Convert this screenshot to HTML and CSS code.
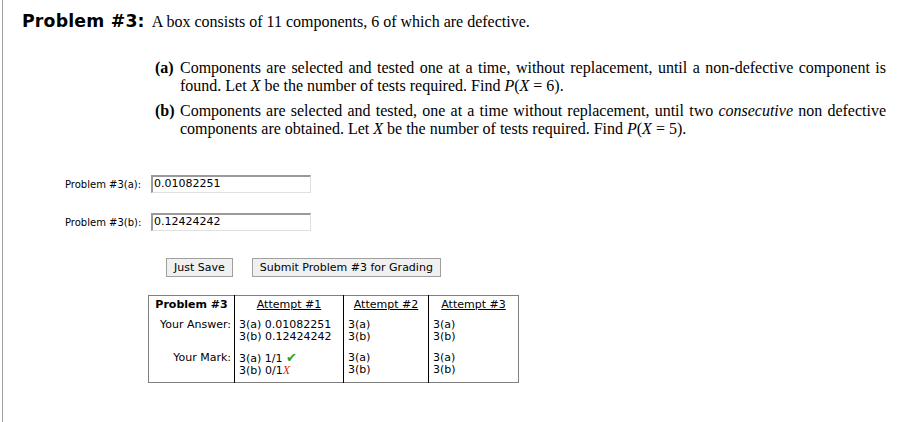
FILE: index.html
```html
<!DOCTYPE html>
<html>
<head>
<meta charset="utf-8">
<link rel="stylesheet" href="styles.css">
</head>
<body>
<div class="page">
  <div class="intro">
    <span class="ptitle">Problem #3:</span>
    <span class="serif">A box consists of 11 components, 6 of which are defective.</span>
  </div>
  <div class="parts">
    <div class="part">
      <div class="plabel">(a)</div>
      <div class="ptext">Components are selected and tested one at a time, without replacement, until a non-defective component is found. Let <i>X</i> be the number of tests required. Find <i>P</i>(<i>X</i> = 6).</div>
    </div>
    <div class="part">
      <div class="plabel">(b)</div>
      <div class="ptext">Components are selected and tested, one at a time without replacement, until two <i>consecutive</i> non defective components are obtained. Let <i>X</i> be the number of tests required. Find <i>P</i>(<i>X</i> = 5).</div>
    </div>
  </div>
  <div class="answers">
    <div class="arow"><span class="alabel">Problem #3(a):</span><span class="input">0.01082251</span></div>
    <div class="arow"><span class="alabel">Problem #3(b):</span><span class="input">0.12424242</span></div>
  </div>
  <div class="buttons">
    <span class="btn">Just Save</span>
    <span class="btn">Submit Problem #3 for Grading</span>
  </div>
  <table class="results">
    <tr class="hdr">
      <th class="c1">Problem #3</th>
      <th class="c2"><u>Attempt #1</u></th>
      <th class="c3"><u>Attempt #2</u></th>
      <th class="c4"><u>Attempt #3</u></th>
    </tr>
    <tr class="ans">
      <td class="lab">Your Answer:</td>
      <td>3(a) 0.01082251<br>3(b) 0.12424242</td>
      <td>3(a)<br>3(b)</td>
      <td>3(a)<br>3(b)</td>
    </tr>
    <tr class="mark">
      <td class="lab">Your Mark:</td>
      <td><div class="ml">3(a) 1/1 <span class="ok">&#10004;</span></div><div class="ml">3(b) 0/1<span class="bad">X</span></div></td>
      <td>3(a)<br>3(b)</td>
      <td>3(a)<br>3(b)</td>
    </tr>
  </table>
</div>
</body>
</html>
```
FILE: styles.css
```css
html, body { margin: 0; padding: 0; background: #fff; }
body { font-family: "DejaVu Sans", Verdana, sans-serif; color: #000; }
.page {
  margin-left: 2px;
  border-left: 1px solid #a0a0a0;
  height: 422px;
  box-sizing: border-box;
  padding-top: 11px;
}
.intro { padding-left: 19px; height: 24px; white-space: nowrap; }
.ptitle { font-weight: bold; font-size: 17.3px; letter-spacing: 0.2px; }
.serif { font-family: "Liberation Serif", "Times New Roman", serif; font-size: 16px; margin-left: 2px; }
.parts { margin-left: 152px; width: 731px; margin-top: 24px; font-family: "Liberation Serif", "Times New Roman", serif; font-size: 16px; }
.part { display: flex; line-height: 18px; margin-bottom: 7px; }
.plabel { width: 25px; flex: none; font-weight: bold; }
.ptext { flex: 1; text-align: justify; }
.answers { margin-top: 37px; padding-left: 62px; display: flex; flex-direction: column; gap: 20px; }
.arow { display: flex; align-items: center; height: 18px; }
.alabel { font-size: 10px; width: 86px; }
.input {
  width: 160px; height: 18px; box-sizing: border-box;
  border-top: 2px solid #9a9a9a; border-left: 2px solid #9a9a9a;
  border-right: 1px solid #e0e0e0; border-bottom: 1px solid #e0e0e0;
  font-size: 11px; line-height: 14px; padding-left: 1px;
}
.buttons { display: flex; gap: 19px; padding-left: 163px; margin-top: 27px; }
.btn {
  font-size: 11px; height: 19px; line-height: 17px; box-sizing: border-box;
  border: 1px solid #a0a0a0; background: #f0f0f0; padding: 0 7px;
}
.results {
  margin-left: 145px; margin-top: 18px;
  border-collapse: collapse; border: 1px solid #808080;
  font-size: 11px; white-space: nowrap;
}
.results th, .results td { padding: 0 4px; vertical-align: top; }
.results th { font-weight: normal; height: 19px; padding-top: 2px; }
.results th.c1 { font-weight: bold; text-align: center; }
.results td.lab { text-align: right; padding-right: 3px; }
.c1 { width: 77px; }
.c2 { width: 100px; }
.c3 { width: 76px; }
.c4 { width: 81px; }
.results td + td, .results th + th { border-left: 1px solid #000; }
.ans td { line-height: 12px; padding-top: 2px; padding-bottom: 9px; }
.mark td { line-height: 12px; padding-bottom: 6px; }
.ml { height: 12px; }
.ok { color: #2e9e2e; font-size: 13px; line-height: 12px; }
.bad { color: #e02020; font-size: 12px; font-family: "Liberation Serif", serif; font-style: italic; }
```
